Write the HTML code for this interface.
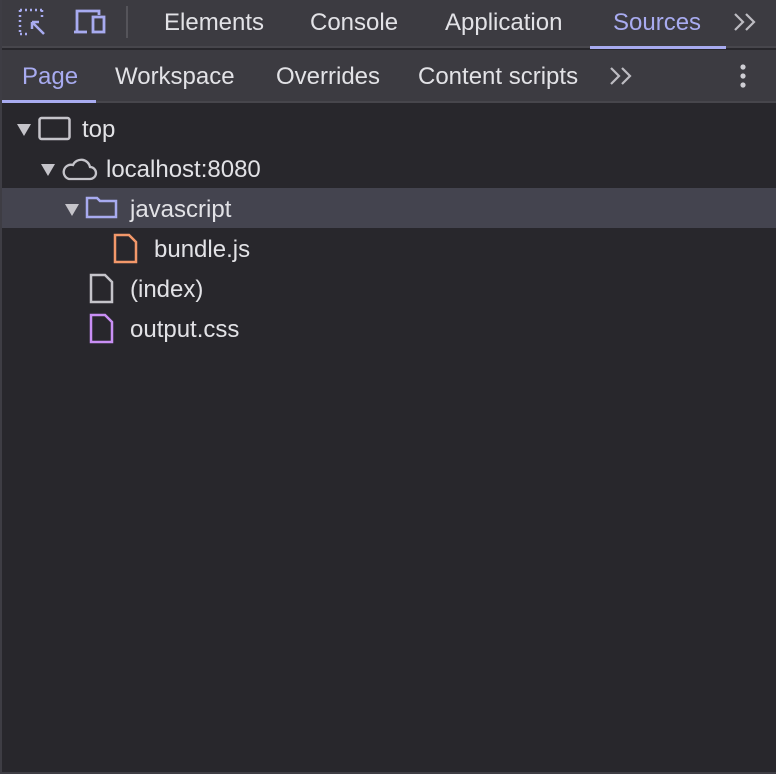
<!DOCTYPE html>
<html><head><style>
*{margin:0;padding:0;box-sizing:border-box}
body{width:776px;height:774px;background:#28272c;font-family:"Liberation Sans",Arial,sans-serif;color:#e2e2e6;position:relative;overflow:hidden}
.bar1{position:absolute;left:0;top:0;width:776px;height:48px;background:#3c3b41;border-bottom:2px solid #47464c}
.bar2{position:absolute;left:0;top:50px;width:776px;height:53px;background:#3c3b41;border-bottom:2px solid #47464c}
.t{position:absolute;font-size:24px;white-space:nowrap}
.row{position:absolute;left:0;width:776px;height:40px}
.sel{background:#44444f}
svg{position:absolute}
</style></head><body>
<div class="bar1"></div>
<div class="bar2"></div>
<div class="row sel" style="top:188px"></div>
<div style="position:absolute;left:0;top:0;width:2px;height:774px;background:#3e3d44"></div>
<div style="position:absolute;left:0;top:772px;width:776px;height:2px;background:#3e3d44"></div>
<svg style="left:18px;top:8px" width="32" height="30" viewBox="0 0 32 30" fill="none" stroke="#a8abf0" stroke-width="2.5">
<path d="M2 2h2M7 2h2M12 2h2M17 2h2M22 2h2M2 2v2M2 7v2M2 12v2M2 17v2M2 22v2M2 26h2M7 26h2M24 2v2M24 7v2" />
<path d="M14 14l12 12M14 14h7M14 14v7"/>
</svg>
<svg style="left:73px;top:8px" width="36" height="30" viewBox="0 0 36 30" fill="none" stroke="#a8abf0" stroke-width="2.8">
<path d="M4 24V3h22v4"/><path d="M1 24h13"/><rect x="20" y="9" width="11" height="15"/>
</svg>
<div style="position:absolute;left:126px;top:6px;width:2px;height:32px;background:#55545a"></div>
<div class="t" style="left:164px;top:9px">Elements</div>
<div class="t" style="left:310px;top:9px">Console</div>
<div class="t" style="left:445px;top:9px">Application</div>
<div class="t" style="left:613px;top:9px;color:#a8abf0">Sources</div>
<div style="position:absolute;left:590px;top:46px;width:136px;height:3px;background:#a8abf0"></div>
<svg style="left:733px;top:12px" width="26" height="20" viewBox="0 0 26 20" fill="none" stroke="#bdbcc2" stroke-width="2.2"><path d="M2 2l8 8-8 8M13 2l8 8-8 8"/></svg>
<div class="t" style="left:22px;top:63px;color:#a8abf0">Page</div>
<div style="position:absolute;left:2px;top:100px;width:94px;height:3px;background:#a8abf0"></div>
<div class="t" style="left:115px;top:63px">Workspace</div>
<div class="t" style="left:276px;top:63px">Overrides</div>
<div class="t" style="left:418px;top:63px">Content scripts</div>
<svg style="left:609px;top:66px" width="26" height="20" viewBox="0 0 26 20" fill="none" stroke="#bdbcc2" stroke-width="2.2"><path d="M2 2l8 8-8 8M13 2l8 8-8 8"/></svg>
<svg style="left:738px;top:63px" width="10" height="26"><circle cx="5" cy="4" r="2.6" fill="#cfced4"/><circle cx="5" cy="13" r="2.6" fill="#cfced4"/><circle cx="5" cy="22" r="2.6" fill="#cfced4"/></svg>
<svg style="left:17px;top:124px" width="14" height="12"><path d="M0 0h14L7 12z" fill="#c5c4ca"/></svg>
<svg style="left:38px;top:116px" width="34" height="26" fill="none" stroke="#c5c4ca" stroke-width="2.5"><rect x="1.5" y="2" width="30" height="21" rx="2"/></svg>
<div class="t" style="left:82px;top:116px">top</div>
<svg style="left:41px;top:164px" width="14" height="12"><path d="M0 0h14L7 12z" fill="#c5c4ca"/></svg>
<svg style="left:60px;top:156px" width="38" height="26" fill="none" stroke="#c5c4ca" stroke-width="2.3"><path d="M9 23h21a6 6 0 0 0 0-12 9 9 0 0 0-17-2 7 7 0 0 0-4 14z"/></svg>
<div class="t" style="left:106px;top:156px">localhost:8080</div>
<svg style="left:65px;top:204px" width="14" height="12"><path d="M0 0h14L7 12z" fill="#c5c4ca"/></svg>
<svg style="left:85px;top:195px" width="34" height="26" fill="none" stroke="#a8abf0" stroke-width="2.5"><path d="M2 3h10l3 3h16v16H2z"/></svg>
<div class="t" style="left:130px;top:196px">javascript</div>
<svg style="left:113px;top:233px" width="26" height="32" fill="none" stroke="#f3986a" stroke-width="2.5"><path d="M2 2h14l7 7v20H2z"/></svg>
<div class="t" style="left:154px;top:236px">bundle.js</div>
<svg style="left:89px;top:273px" width="26" height="32" fill="none" stroke="#c5c4ca" stroke-width="2.5"><path d="M2 2h14l7 7v20H2z"/></svg>
<div class="t" style="left:130px;top:276px">(index)</div>
<svg style="left:89px;top:313px" width="26" height="32" fill="none" stroke="#c98ff5" stroke-width="2.5"><path d="M2 2h14l7 7v20H2z"/></svg>
<div class="t" style="left:130px;top:316px">output.css</div>
</body></html>
